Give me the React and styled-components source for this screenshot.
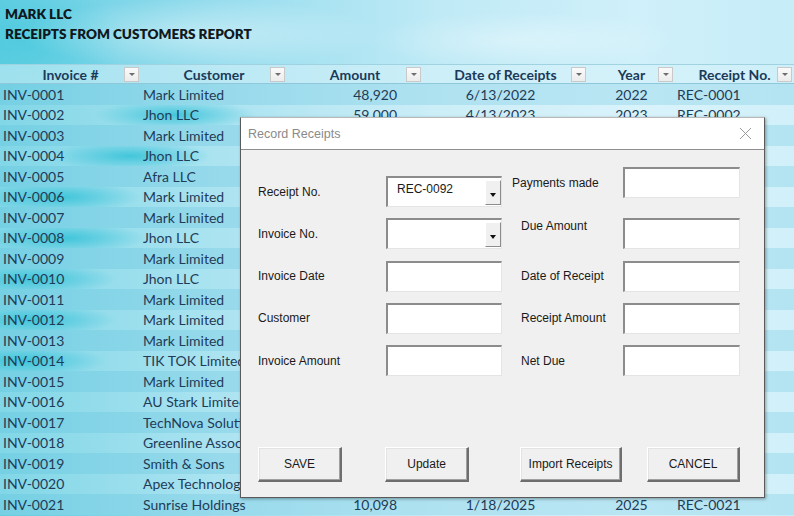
import React from "react";
import styled, { createGlobalStyle } from "styled-components";

const GlobalStyle = createGlobalStyle`
  html, body {
    margin: 0;
    padding: 0;
  }
  body {
    font-family: "Lato", "Noto Sans", sans-serif;
  }
`;

const rows = [
  ["INV-0001", "Mark Limited", "48,920", "6/13/2022", "2022", "REC-0001", null],
  ["INV-0002", "Jhon LLC", "59,000", "4/13/2023", "2023", "REC-0002", 130],
  ["INV-0003", "Mark Limited", "32,450", "7/21/2023", "2023", "REC-0003", null],
  ["INV-0004", "Jhon LLC", "27,800", "8/02/2023", "2023", "REC-0004", 85],
  ["INV-0005", "Afra LLC", "18,600", "9/15/2023", "2023", "REC-0005", null],
  ["INV-0006", "Mark Limited", "41,250", "10/04/2023", "2023", "REC-0006", 15],
  ["INV-0007", "Mark Limited", "22,900", "11/19/2023", "2023", "REC-0007", null],
  ["INV-0008", "Jhon LLC", "36,700", "1/08/2024", "2024", "REC-0008", 20],
  ["INV-0009", "Mark Limited", "15,300", "2/14/2024", "2024", "REC-0009", null],
  ["INV-0010", "Jhon LLC", "29,450", "3/22/2024", "2024", "REC-0010", -10],
  ["INV-0011", "Mark Limited", "44,100", "4/30/2024", "2024", "REC-0011", null],
  ["INV-0012", "Mark Limited", "19,875", "5/18/2024", "2024", "REC-0012", -10],
  ["INV-0013", "Mark Limited", "33,600", "6/25/2024", "2024", "REC-0013", null],
  ["INV-0014", "TIK TOK Limited", "52,300", "7/09/2024", "2024", "REC-0014", -20],
  ["INV-0015", "Mark Limited", "24,750", "8/16/2024", "2024", "REC-0015", null],
  ["INV-0016", "AU Stark Limited", "38,900", "9/03/2024", "2024", "REC-0016", null],
  ["INV-0017", "TechNova Solutions", "17,450", "10/11/2024", "2024", "REC-0017", null],
  ["INV-0018", "Greenline Associates", "26,300", "11/27/2024", "2024", "REC-0018", null],
  ["INV-0019", "Smith & Sons", "12,980", "12/05/2024", "2024", "REC-0019", null],
  ["INV-0020", "Apex Technologies", "31,640", "12/20/2024", "2024", "REC-0020", null],
  ["INV-0021", "Sunrise Holdings", "10,098", "1/18/2025", "2025", "REC-0021", null],
];

const columns = [
  { title: "Invoice #", align: "left", pad: "0 0 0 3px" },
  { title: "Customer", align: "left", pad: "0 0 0 2px" },
  { title: "Amount", align: "right", pad: "0 26px 0 0" },
  { title: "Date of Receipts", align: "center", pad: "0 10px 0 0" },
  { title: "Year", align: "center", pad: "0" },
  { title: "Receipt No.", align: "left", pad: "0 0 0 2px" },
];

const GRID = "141px 146px 136px 165px 87px 119px";

const Sheet = styled.div`
  position: relative;
  width: 794px;
  height: 516px;
  overflow: hidden;
  background:
    radial-gradient(ellipse 260px 50px at 200px 34px, rgba(255, 255, 255, 0.4), transparent 70%),
    radial-gradient(ellipse 220px 40px at 520px 40px, rgba(255, 255, 255, 0.35), transparent 70%),
    radial-gradient(ellipse 120px 70px at 30px 40px, rgba(60, 200, 220, 0.5), transparent 80%),
    linear-gradient(90deg, #62cde1 0%, #98ddee 28%, #bfeaf6 55%, #d0f0fa 80%, #c6edf8 100%);
`;

const TitleBlock = styled.div`
  height: 64px;
  padding: 4px 0 0 5px;
  box-sizing: border-box;
  color: #101820;
  font-weight: 800;
  font-size: 13.5px;
  line-height: 20px;
`;

const HeaderRow = styled.div`
  display: grid;
  grid-template-columns: ${GRID};
  height: 20px;
  border-top: 1px solid #9fd3e2;
  border-bottom: 1px solid #8fc8da;
  box-sizing: border-box;
  background: rgba(215, 242, 250, 0.55);
`;

const HeaderCell = styled.div`
  position: relative;
  display: flex;
  align-items: center;
  justify-content: center;
  color: #1b3a5a;
  font-weight: 700;
  font-size: 14px;
`;

const FilterButton = styled.span`
  position: absolute;
  right: 2px;
  top: 2px;
  width: 15px;
  height: 15px;
  box-sizing: border-box;
  background: linear-gradient(#fafafa, #ececec);
  border: 1px solid #c9c9c9;
  display: flex;
  align-items: center;
  justify-content: center;

  &::after {
    content: "";
    border-left: 3px solid transparent;
    border-right: 3px solid transparent;
    border-top: 3px solid #6d6d6d;
  }
`;

const Row = styled.div`
  display: grid;
  grid-template-columns: ${GRID};
  height: 20.5px;
  background: ${({ $band, $blob }) =>
    $band
      ? "rgba(150, 212, 232, 0.38)"
      : $blob !== null
      ? `radial-gradient(ellipse 95px 18px at ${$blob + 45}px 50%, rgba(45, 192, 214, 0.8), transparent 85%), rgba(255, 255, 255, 0.2)`
      : "rgba(255, 255, 255, 0.2)"};
`;

const Cell = styled.div`
  display: flex;
  align-items: center;
  justify-content: ${({ $align }) =>
    $align === "right" ? "flex-end" : $align === "center" ? "center" : "flex-start"};
  padding: ${({ $pad }) => $pad};
  color: #1f3c58;
  font-size: 14px;
  white-space: nowrap;
`;

/* ---------- dialog ---------- */

const Dialog = styled.div`
  position: absolute;
  left: 240px;
  top: 117px;
  width: 525px;
  height: 381px;
  box-sizing: border-box;
  display: flex;
  flex-direction: column;
  border: 1px solid #5a5a5a;
  border-top-color: #b8b8b8;
  box-shadow: 1px 1px 3px rgba(0, 0, 0, 0.35);
  font-family: "Liberation Sans", Arial, sans-serif;
  font-size: 12px;
  color: #1a1a1a;
`;

const TitleBar = styled.div`
  height: 32px;
  flex: none;
  box-sizing: border-box;
  background: #ffffff;
  border-bottom: 1px solid #8f8f8f;
  display: flex;
  align-items: center;
  justify-content: space-between;
  padding: 0 12px 0 7px;
  color: #8a8a8a;
  font-size: 12.5px;
`;

const DialogBody = styled.div`
  flex: 1;
  background: #f0f0f0;
  display: flex;
  flex-direction: column;
  padding: 26px 24px 15px 17px;
`;

const FieldsWrap = styled.div`
  display: grid;
  grid-template-columns: 128px 116px 10px 111px 117px;
  grid-auto-rows: 31px;
  row-gap: 11.3px;
`;

const Label = styled.div`
  display: flex;
  align-items: center;
  padding-left: ${({ $indent }) => $indent || 0}px;
  margin-top: ${({ $shift }) => -($shift || 0)}px;
  margin-bottom: ${({ $shift }) => $shift || 0}px;
  grid-column: ${({ $col }) => $col};
  white-space: nowrap;
`;

const TextBox = styled.div`
  box-sizing: border-box;
  background: #ffffff;
  border-top: 2px solid #8c8c8c;
  border-left: 2px solid #8c8c8c;
  border-right: 1px solid #e4e4e4;
  border-bottom: 1px solid #e4e4e4;
  margin-top: ${({ $raise }) => -($raise || 0)}px;
  margin-bottom: ${({ $raise }) => $raise || 0}px;
  grid-column: ${({ $col }) => $col};
`;

const Combo = styled(TextBox)`
  display: flex;
  justify-content: space-between;
  padding: 4px 0 1px 9px;
  font-size: 12px;
`;

const DropButton = styled.span`
  width: 16px;
  box-sizing: border-box;
  margin: -2px 0 0;
  background: #f0f0f0;
  border-top: 1px solid #ffffff;
  border-left: 1px solid #ffffff;
  border-right: 1px solid #8c8c8c;
  border-bottom: 1px solid #8c8c8c;
  display: flex;
  align-items: center;
  justify-content: center;
  padding-top: 4px;

  &::after {
    content: "";
    border-left: 3.5px solid transparent;
    border-right: 3.5px solid transparent;
    border-top: 4px solid #111111;
  }
`;

const Spacer = styled.div`
  flex: 1;
`;

const ButtonRow = styled.div`
  display: flex;
  align-items: flex-end;
`;

const Button = styled.div`
  width: ${({ $w }) => $w}px;
  height: 35px;
  margin-left: ${({ $gap }) => $gap || 0}px;
  box-sizing: border-box;
  display: flex;
  align-items: center;
  justify-content: center;
  background: #f0f0f0;
  border-top: 1px solid #ffffff;
  border-left: 1px solid #ffffff;
  border-right: 2px solid #6e6e6e;
  border-bottom: 2px solid #6e6e6e;
  box-shadow: inset -1px -1px 0 #a0a0a0, inset 1px 1px 0 #e3e3e3;
  font-size: 12px;
  color: #1a1a1a;
`;

function CloseIcon() {
  return (
    <svg width="13" height="13" viewBox="0 0 13 13">
      <path d="M1 1 L12 12 M12 1 L1 12" stroke="#9a9a9a" strokeWidth="1" fill="none" />
    </svg>
  );
}

const leftFields = [
  { label: "Receipt No.", combo: true, value: "REC-0092" },
  { label: "Invoice No.", combo: true, value: "" },
  { label: "Invoice Date" },
  { label: "Customer" },
  { label: "Invoice Amount" },
];

const rightFields = [
  { label: "Payments made", indent: 0, raise: 9, shift: 9 },
  { label: "Due Amount", indent: 9, shift: 8 },
  { label: "Date of Receipt", indent: 9 },
  { label: "Receipt Amount", indent: 9 },
  { label: "Net Due", indent: 9 },
];

function RecordReceipts() {
  return (
    <Dialog>
      <TitleBar>
        <span>Record Receipts</span>
        <CloseIcon />
      </TitleBar>
      <DialogBody>
        <FieldsWrap>
          {leftFields.map((f, i) => {
            const r = rightFields[i];
            return (
              <React.Fragment key={f.label}>
                <Label $col={1}>{f.label}</Label>
                {f.combo ? (
                  <Combo $col={2}>
                    <span>{f.value}</span>
                    <DropButton />
                  </Combo>
                ) : (
                  <TextBox $col={2} />
                )}
                <Label $col={4} $indent={r.indent} $shift={r.shift}>
                  {r.label}
                </Label>
                <TextBox $col={5} $raise={r.raise} />
              </React.Fragment>
            );
          })}
        </FieldsWrap>
        <Spacer />
        <ButtonRow>
          <Button $w={85}>SAVE</Button>
          <Button $w={85} $gap={43}>Update</Button>
          <Button $w={103} $gap={51}>Import Receipts</Button>
          <Button $w={94} $gap={25}>CANCEL</Button>
        </ButtonRow>
      </DialogBody>
    </Dialog>
  );
}

export default function App() {
  return (
    <>
      <GlobalStyle />
      <Sheet>
        <TitleBlock>
          <div>MARK LLC</div>
          <div>RECEIPTS FROM CUSTOMERS REPORT</div>
        </TitleBlock>
        <HeaderRow>
          {columns.map((c) => (
            <HeaderCell key={c.title}>
              {c.title}
              <FilterButton />
            </HeaderCell>
          ))}
        </HeaderRow>
        {rows.map((r, i) => (
          <Row key={r[0]} $band={i % 2 === 0} $blob={r[6]}>
            {r.slice(0, 6).map((v, j) => (
              <Cell key={j} $align={columns[j].align} $pad={columns[j].pad}>
                {v}
              </Cell>
            ))}
          </Row>
        ))}
        <RecordReceipts />
      </Sheet>
    </>
  );
}
